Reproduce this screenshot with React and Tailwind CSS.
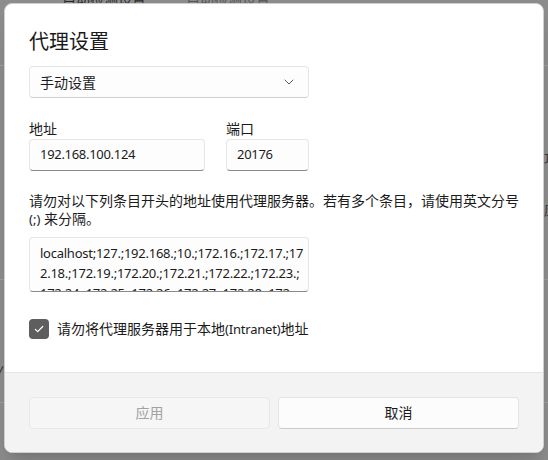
import React from "react";

const font = {
  fontFamily: '"Noto Sans", "Noto Sans CJK SC", sans-serif',
};

function Chevron() {
  return (
    <svg width="10" height="6" viewBox="0 0 10 6" fill="none">
      <path d="M1 1l4 4 4-4" stroke="#5c5c5c" strokeWidth="1" strokeLinecap="round" strokeLinejoin="round" />
    </svg>
  );
}

function Check() {
  return (
    <svg width="12" height="12" viewBox="0 0 12 12" fill="none">
      <path d="M2.3 6.3l2.4 2.4 5-5.2" stroke="#fff" strokeWidth="1.2" strokeLinecap="round" strokeLinejoin="round" />
    </svg>
  );
}

export default function App() {
  return (
    <div className="relative w-[548px] h-[460px] overflow-hidden bg-[#8c8c8c] text-[#1b1b1b]" style={font}>
      {/* page behind the dialog */}
      <div className="flex flex-col">
        <div className="h-[78px] border-b border-[#9c9c9c] flex gap-[40px] pl-[62px] -mt-[12px] text-[14px] text-[#2a2a2a]">
          <span>自动检测设置</span>
          <span className="text-[#555]">自动检测设置</span>
        </div>
        <div className="h-[214px] border-b border-[#9c9c9c] flex flex-col items-end pt-[82px] gap-[30px] text-[14px] text-[#3a3a3a] -mr-[10px]">
          <span>功</span>
          <span>应</span>
        </div>
        <div className="h-[123px] border-b border-[#9c9c9c] pt-[80px] -ml-[9px] text-[14px] text-[#2a2a2a]">
          <span>∨</span>
        </div>
      </div>

      {/* dialog */}
      <div className="absolute left-[4px] top-[3px] w-[540px] h-[450px] bg-white rounded-lg border border-[#cfcfcf] shadow-xl flex flex-col overflow-hidden">
        <div className="flex-1 flex flex-col pt-6 px-6">
          <h1 className="text-[20px] leading-[28px] font-normal">代理设置</h1>

          <div className="mt-[10px] w-[280px] h-8 rounded-[4px] bg-[#fdfdfd] border border-[#e6e6e6] border-b-[#d0d0d0] flex items-center justify-between pl-[10px] pr-[14px] text-[14px]">
            <span>手动设置</span>
            <Chevron />
          </div>

          <div className="mt-[21px] flex gap-[21px] text-[14px]">
            <div className="flex flex-col">
              <label className="leading-5">地址</label>
              <div className="w-[176px] h-8 rounded-[4px] bg-[#fdfdfd] border border-[#e6e6e6] border-b-[#8a8a8a] flex items-center px-[10px] text-[13px] tracking-[-0.3px]">
                192.168.100.124
              </div>
            </div>
            <div className="flex flex-col">
              <label className="leading-5">端口</label>
              <div className="w-[83px] h-8 rounded-[4px] bg-[#fdfdfd] border border-[#e6e6e6] border-b-[#8a8a8a] flex items-center px-[10px] text-[13px] tracking-[-0.3px]">
                20176
              </div>
            </div>
          </div>

          <p className="mt-[21px] text-[14px] leading-[18px]">
            请勿对以下列条目开头的地址使用代理服务器。若有多个条目，请使用英文分号 <span className="text-[13px]">(;)</span> 来分隔。
          </p>

          <div className="mt-[9px] w-[280px] h-[55px] rounded-[4px] bg-[#fdfdfd] border border-[#e6e6e6] border-b-[#8a8a8a] overflow-hidden">
            <div className="pt-[5px] px-[10px] text-[13px] tracking-[-0.25px] leading-5 whitespace-nowrap">
              <div>localhost;127.;192.168.;10.;172.16.;172.17.;17</div>
              <div>2.18.;172.19.;172.20.;172.21.;172.22.;172.23.;</div>
              <div>172.24.;172.25.;172.26.;172.27.;172.28.;172.</div>
            </div>
          </div>

          <div className="mt-[26px] flex items-center gap-2 text-[14px]">
            <span className="w-5 h-5 rounded-[4px] bg-[#5e5e5e] flex items-center justify-center">
              <Check />
            </span>
            <span>
              请勿将代理服务器用于本地<span className="text-[13px] tracking-[-0.2px]">(Intranet)</span>地址
            </span>
          </div>
        </div>

        <div className="h-[80px] bg-[#f3f3f3] border-t border-[#e5e5e5] px-6 flex items-center gap-2 text-[14px]">
          <button className="flex-1 h-8 rounded-[4px] bg-[#f6f6f6] border border-[#e8e8e8] text-[#a2a2a2]">
            应用
          </button>
          <button className="flex-1 h-8 rounded-[4px] bg-[#fcfcfc] border border-[#e5e5e5] border-b-[#cccccc] text-[#1b1b1b]">
            取消
          </button>
        </div>
      </div>
    </div>
  );
}
